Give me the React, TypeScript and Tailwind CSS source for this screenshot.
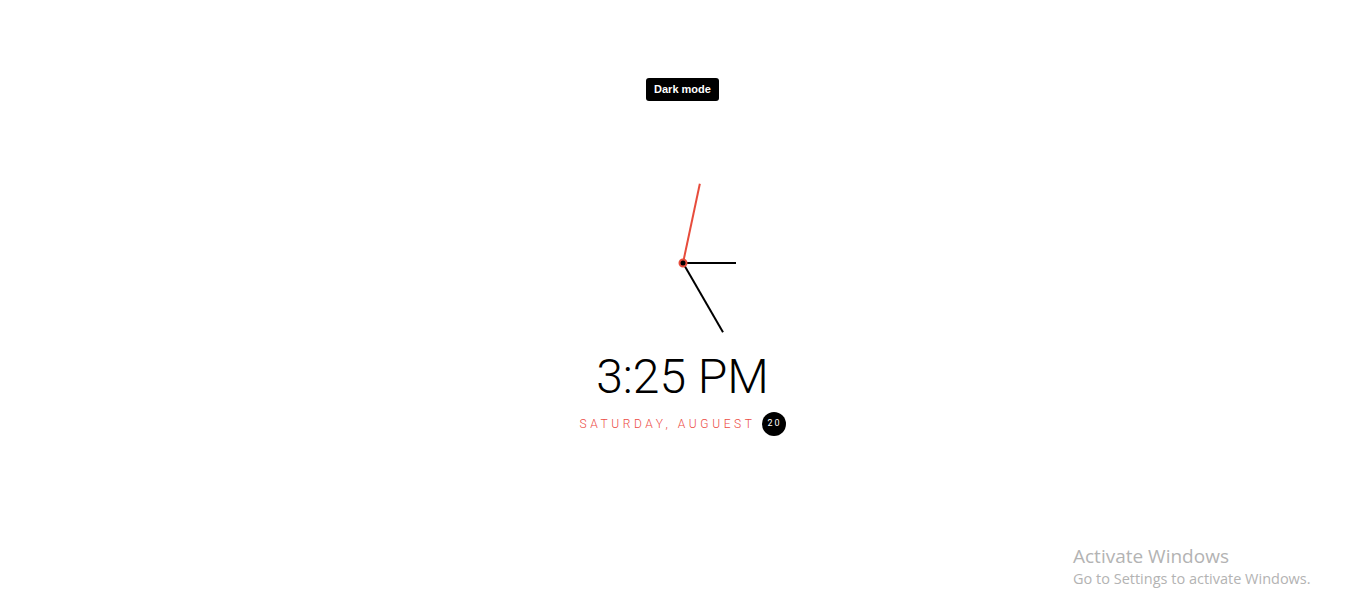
import React from 'react';

const Clock: React.FC<{ h: number; m: number; s: number }> = ({ h, m, s }) => {
    const cx = 100;
    const cy = 100;
    const hand = (deg: number, len: number) => {
        const r = (deg * Math.PI) / 180;
        return { x2: cx + Math.sin(r) * len, y2: cy - Math.cos(r) * len };
    };
    const hourDeg = ((h % 12) / 12) * 360;
    const minDeg = (m / 60) * 360;
    const secDeg = (s / 60) * 360;

    return (
        <svg width="200" height="190" viewBox="0 0 200 190">
            <line x1={cx} y1={cy} {...hand(hourDeg, 53)} stroke="#000" strokeWidth="2" />
            <line x1={cx} y1={cy} {...hand(minDeg, 80)} stroke="#000" strokeWidth="2" />
            <line x1={cx} y1={cy} {...hand(secDeg, 81)} stroke="#e74c3c" strokeWidth="2" />
            <circle cx={cx} cy={cy} r="3.5" fill="#000" stroke="#e74c3c" strokeWidth="2" />
        </svg>
    );
};

export default function App() {
    return (
        <div className="relative min-h-[616px] w-full bg-white overflow-hidden">
            <div className="flex flex-col items-center">
                <button className="mt-[78px] h-[23px] px-[8px] bg-black text-white rounded-[3px] text-[11px] font-bold font-['Liberation_Sans',Arial,sans-serif]">
                    Dark mode
                </button>

                <div className="mt-[62px]">
                    <Clock h={3} m={25} s={2} />
                </div>

                <div className="font-['Roboto',sans-serif] font-light text-[48px] leading-none text-black">
                    3:25 PM
                </div>

                <div className="mt-[11px] flex items-center gap-[6px] font-['Roboto',sans-serif]">
                    <span className="text-[12px] font-light tracking-[3.6px] text-[#ec4b44] uppercase">
                        Saturday, Auguest
                    </span>
                    <span className="w-6 h-6 rounded-full bg-black text-white flex items-center justify-center text-[9px] tracking-[2px] pl-[2px]">
                        20
                    </span>
                </div>
            </div>

            {/* windows watermark */}
            <div className="absolute left-[1073px] top-[544px] text-[#b3b3b3] font-['Open_Sans','Noto_Sans',sans-serif]">
                <p className="text-[19px] leading-[25px]">Activate Windows</p>
                <p className="text-[14.5px] leading-[20px]">Go to Settings to activate Windows.</p>
            </div>
        </div>
    );
}
